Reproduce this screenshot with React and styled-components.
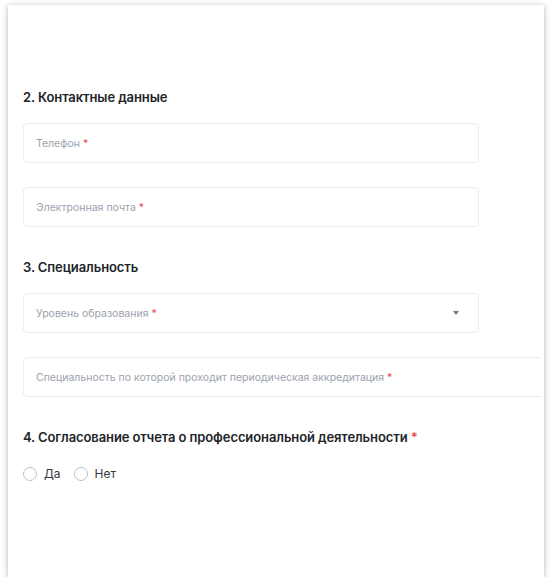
import React from 'react';
import styled, { createGlobalStyle } from 'styled-components';

const GlobalStyle = createGlobalStyle`
  html, body {
    margin: 0;
    padding: 0;
    background: #fff;
  }
  body {
    font-family: Inter, "Noto Sans", "Liberation Sans", sans-serif;
    -webkit-font-smoothing: antialiased;
  }
`;

const Card = styled.div`
  width: 533px;
  height: 572px;
  margin: 5px 0 0 8px;
  padding-right: 3px;
  background: #fff;
  box-shadow: 0 1px 6px rgba(0, 0, 0, 0.3);
`;

const Content = styled.div`
  height: 100%;
  overflow: hidden;
  padding: 82px 0 0 15px;
  box-sizing: border-box;
`;

const Section = styled.section`
  display: flex;
  flex-direction: column;
  gap: 24px;
  margin-bottom: 30px;
`;

const Heading = styled.h2`
  margin: 0 0 -8px;
  font-size: 13px;
  line-height: 20px;
  font-weight: 600;
  color: #222429;
  letter-spacing: -0.1px;
`;

const Req = styled.span`
  color: #e5484d;
`;

const Field = styled.div`
  box-sizing: border-box;
  width: ${(p) => p.width || '456px'};
  height: 40px;
  flex-shrink: 0;
  display: flex;
  align-items: center;
  justify-content: space-between;
  padding: 0 19px 0 12px;
  border: 1px solid #ececee;
  border-radius: 4px;
  background: #fff;
`;

const Placeholder = styled.span`
  font-size: 10.5px;
  color: #9ba2ae;
`;

const Arrow = styled.span`
  width: 0;
  height: 0;
  border-left: 3.5px solid transparent;
  border-right: 3.5px solid transparent;
  border-top: 4px solid #6a7d96;
`;

const Radios = styled.div`
  display: flex;
  align-items: center;
  gap: 13px;
  margin-top: 3px;
`;

const RadioLabel = styled.label`
  display: flex;
  align-items: center;
  gap: 7px;
  font-size: 12px;
  color: #34363b;
`;

const Circle = styled.span`
  box-sizing: border-box;
  width: 14px;
  height: 14px;
  border-radius: 50%;
  border: 1.5px solid #bcc1c8;
`;

const Input = ({ label, width, select }) => (
  <Field width={width}>
    <Placeholder>
      {label} <Req>*</Req>
    </Placeholder>
    {select && <Arrow />}
  </Field>
);

export default function App() {
  return (
    <>
      <GlobalStyle />
      <Card>
        <Content>
          <Section>
            <Heading>2. Контактные данные</Heading>
            <Input label="Телефон" />
            <Input label="Электронная почта" />
          </Section>
          <Section>
            <Heading>3. Специальность</Heading>
            <Input label="Уровень образования" select />
            <Input
              label="Специальность по которой проходит периодическая аккредитация"
              width="540px"
            />
          </Section>
          <Section>
            <Heading>
              4. Согласование отчета о профессиональной деятельности <Req>*</Req>
            </Heading>
            <Radios>
              <RadioLabel>
                <Circle />
                Да
              </RadioLabel>
              <RadioLabel>
                <Circle />
                Нет
              </RadioLabel>
            </Radios>
          </Section>
        </Content>
      </Card>
    </>
  );
}
